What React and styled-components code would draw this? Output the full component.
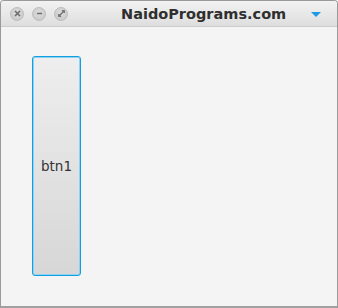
import React from "react";
import styled, { createGlobalStyle } from "styled-components";

const Global = createGlobalStyle`
  html, body { margin: 0; padding: 0; background: #f4f4f4; }
  body { width: 338px; height: 308px; overflow: hidden; }
`;

const Window = styled.div`
  box-sizing: border-box;
  width: 338px;
  height: 308px;
  display: flex;
  flex-direction: column;
  border: 1px solid #9a9a9a;
  border-bottom: 2px solid #a0a0a0;
  border-radius: 4px 4px 0 0;
  overflow: hidden;
  background: #f4f4f4;
  font-family: "DejaVu Sans", sans-serif;
`;

const TitleBar = styled.div`
  box-sizing: border-box;
  height: 26px;
  flex: none;
  display: flex;
  align-items: center;
  padding: 0 9px 0 9px;
  background: linear-gradient(#f2f2f2, #dedede);
  border-bottom: 1px solid #cdcdcd;
`;

const Controls = styled.div`
  display: flex;
  gap: 8px;
  align-items: center;
`;

const Circle = styled.div`
  width: 14px;
  height: 14px;
  border-radius: 50%;
  background: radial-gradient(circle at 50% 40%, #dedede, #c4c4c4);
  border: 1px solid #bdbdbd;
  box-sizing: border-box;
  display: flex;
  align-items: center;
  justify-content: center;
`;

const Title = styled.div`
  flex: 1;
  padding-left: 53px;
  font-weight: bold;
  font-size: 14.5px;
  color: #2f2f2f;
  white-space: nowrap;
`;

const Menu = styled.div`
  width: 0;
  height: 0;
  border-left: 5px solid transparent;
  border-right: 5px solid transparent;
  border-top: 5px solid #1b9be4;
  margin-right: 7px;
  margin-top: 2px;
`;

const Content = styled.div`
  flex: 1;
  padding: 29px 0 0 31px;
`;

const Button = styled.div`
  box-sizing: border-box;
  width: 49px;
  height: 220px;
  border: 1px solid #129fe2;
  border-radius: 3px;
  background: linear-gradient(#eeeeee, #d7d7d7);
  box-shadow: inset 0 0 0 1px #8fd2f2;
  display: flex;
  align-items: center;
  justify-content: center;
  font-size: 13.5px;
  color: #333333;
`;

const CloseIcon = () => (
  <svg width="7" height="7" viewBox="0 0 7 7">
    <path d="M1 1L6 6M6 1L1 6" stroke="#6e6e6e" strokeWidth="1.7" />
  </svg>
);
const MinIcon = () => (
  <svg width="7" height="7" viewBox="0 0 7 7">
    <path d="M1 3.5H6" stroke="#6e6e6e" strokeWidth="1.7" />
  </svg>
);
const MaxIcon = () => (
  <svg width="7" height="7" viewBox="0 0 7 7">
    <path d="M4 0.5H6.5V3Z M3 6.5H0.5V4Z" fill="#6e6e6e" stroke="#6e6e6e" strokeWidth="0.8" />
    <path d="M5.5 1.5L1.5 5.5" stroke="#6e6e6e" strokeWidth="1.2" />
  </svg>
);

export default function App() {
  return (
    <>
      <Global />
      <Window>
        <TitleBar>
          <Controls>
            <Circle><CloseIcon /></Circle>
            <Circle><MinIcon /></Circle>
            <Circle><MaxIcon /></Circle>
          </Controls>
          <Title>NaidoPrograms.com</Title>
          <Menu />
        </TitleBar>
        <Content>
          <Button>btn1</Button>
        </Content>
      </Window>
    </>
  );
}
